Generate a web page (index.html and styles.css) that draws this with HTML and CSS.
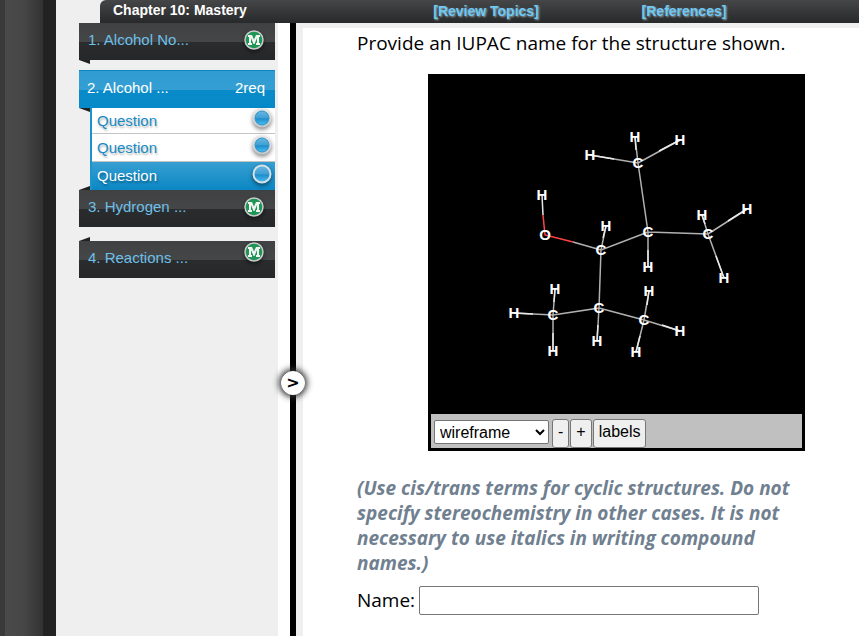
FILE: index.html
```html
<!DOCTYPE html>
<html lang="en">
<head>
    <meta charset="UTF-8">
    <meta name="viewport" content="width=device-width, initial-scale=1.0">
    <title>Chapter 10: Mastery</title>
    <link rel="stylesheet" href="styles.css">
</head>
<body>
    <svg class="defs" aria-hidden="true">
        <defs>
            <linearGradient id="ball" x1="0" y1="0" x2="0" y2="1">
                <stop offset="0" stop-color="#6ab8e2"/>
                <stop offset="0.5" stop-color="#3f9fd4"/>
                <stop offset="0.55" stop-color="#1e8ccc"/>
                <stop offset="1" stop-color="#4cc0f0"/>
            </linearGradient>
            <linearGradient id="ring" x1="0" y1="0" x2="0" y2="1">
                <stop offset="0" stop-color="#e8e8e8"/>
                <stop offset="1" stop-color="#c4c8ca"/>
            </linearGradient>
            <symbol id="mastered" viewBox="0 0 20 20">
                <circle cx="10" cy="10" r="9" fill="#1f9656" stroke="#c9cccb" stroke-width="1.500"/>
                <path d="M4 5h4l2 4.500L12 5h4v2h-1v6h1v2h-4v-2h1V8l-2.500 6h-1L7 8v5h1v2H4v-2h1V7H4z" fill="#f2f3f2"/>
            </symbol>
            <symbol id="question" viewBox="0 0 20 20">
                <circle cx="10" cy="10" r="9.500" fill="url(#ring)"/>
                <circle cx="10" cy="10" r="7" fill="url(#ball)" stroke="#2b93cc"/>
            </symbol>
            <symbol id="current" viewBox="0 0 20 20">
                <circle cx="10" cy="10" r="8.500" fill="url(#ball)" stroke="#d5e2e9" stroke-width="2"/>
            </symbol>
        </defs>
    </svg>

    <div class="rail"></div>
    <div class="page">
        <header class="topbar">
            <h1>Chapter 10: Mastery</h1>
            <a href="#">[Review Topics]</a>
            <a href="#">[References]</a>
        </header>
        <div class="columns">
            <nav class="sidebar">
                <a class="topic fold-below" href="#">
                    <span>1. Alcohol No...</span>
                    <svg class="icon"><use href="#mastered"/></svg>
                </a>
                <a class="topic active" href="#">
                    <span>2. Alcohol ...</span>
                    <span>2req</span>
                </a>
                <div class="questions">
                    <a class="question" href="#">Question <svg class="icon"><use href="#question"/></svg></a>
                    <a class="question" href="#">Question <svg class="icon"><use href="#question"/></svg></a>
                    <a class="question current" href="#">Question <svg class="icon"><use href="#current"/></svg></a>
                </div>
                <a class="topic fold-above" href="#">
                    <span>3. Hydrogen ...</span>
                    <svg class="icon"><use href="#mastered"/></svg>
                </a>
                <a class="topic fold-above last" href="#">
                    <span>4. Reactions ...</span>
                    <svg class="icon"><use href="#mastered"/></svg>
                </a>
            </nav>
            <div class="divider">
                <button class="toggle" type="button" aria-label="Toggle sidebar">&gt;</button>
            </div>
            <main class="content">
                <p class="prompt">Provide an IUPAC name for the structure shown.</p>
                <div class="viewer">
                    <svg class="molecule" viewBox="0 0 371 337">
                        <g class="bonds">
                            <path d="M207 86L217 155L277 157M217 155L170 173L168 231L122 238M168 231L213 243"/>
                            <path d="M207 86L204 60M207 86L249 63M207 86L159 78M217 155V190M277 157L271 138M277 157L316 132M277 157L293 201M170 173L175 149M168 231L166 264M122 238L124 212M122 238L83 236M122 238V274M213 243L218 214M213 243L249 254M213 243L205 275M170 173L142 165"/>
                        </g>
                        <path class="bonds-h" d="M205 73L204 60M228 74L249 63M183 82L159 78M217 173V190M274 147L271 138M297 144L316 132M285 179L293 201M172 161L175 149M167 248L166 264M123 225L124 212M102 237L83 236M122 256V274M216 228L218 214M231 248L249 254M209 259L205 275M112 138L111 118"/>
                        <path class="bonds-o" d="M112 138L114 158L142 165"/>
                        <g class="atoms">
                            <text x="207" y="91">C</text>
                            <text x="204" y="65">H</text>
                            <text x="249" y="68">H</text>
                            <text x="159" y="83">H</text>
                            <text x="217" y="160">C</text>
                            <text x="217" y="195">H</text>
                            <text x="277" y="162">C</text>
                            <text x="271" y="143">H</text>
                            <text x="316" y="137">H</text>
                            <text x="293" y="206">H</text>
                            <text x="170" y="178">C</text>
                            <text x="175" y="154">H</text>
                            <text x="114" y="163">O</text>
                            <text x="111" y="123">H</text>
                            <text x="168" y="236">C</text>
                            <text x="166" y="269">H</text>
                            <text x="122" y="243">C</text>
                            <text x="124" y="217">H</text>
                            <text x="83" y="241">H</text>
                            <text x="122" y="279">H</text>
                            <text x="213" y="248">C</text>
                            <text x="218" y="219">H</text>
                            <text x="249" y="259">H</text>
                            <text x="205" y="280">H</text>
                        </g>
                    </svg>
                    <div class="toolbar">
                        <select aria-label="Display style">
                            <option>wireframe</option>
                        </select>
                        <button type="button">-</button>
                        <button type="button">+</button>
                        <button type="button">labels</button>
                    </div>
                </div>
                <p class="hint">(Use cis/trans terms for cyclic structures. Do not specify stereochemistry in other cases. It is not necessary to use italics in writing compound names.)</p>
                <div class="answer">
                    <label for="name">Name:</label>
                    <input type="text" id="name">
                </div>
            </main>
        </div>
    </div>
</body>
</html>
```

FILE: styles.css
```css
* {
    box-sizing: border-box;
}
body {
    display: flex;
    min-height: 100vh;
    margin: 0;
    background-color: #efefef;
    font-family: "Liberation Sans", Arial, sans-serif;
}
a {
    text-decoration: none;
}
.defs {
    position: absolute;
    width: 0;
    height: 0;
}

/* left edge */
.rail {
    flex: none;
    width: 56px;
    border-left: 5px solid #3a3a3a;
    border-right: 13px solid #222;
    background: linear-gradient(to right, #4a4a4a, #464646 50%, #323232);
}
.page {
    display: flex;
    flex-direction: column;
    flex: 1;
    min-width: 0;
}

/* top bar */
.topbar {
    display: grid;
    grid-template-columns: 274px 198px 198px;
    align-items: center;
    height: 23px;
    margin-left: 44px;
    padding: 0 0 2px 13px;
    border-top-left-radius: 6px;
    background: linear-gradient(#454648, #28292b);
    font-size: 14px;
    font-weight: bold;
    line-height: 20px;
}
.topbar h1 {
    margin: 0 0 2px;
    font-size: 14px;
    color: #fff;
}
.topbar a {
    text-align: center;
    color: #6dc9f5;
    text-shadow: 1px 1px 2px #9aa;
}
.columns {
    display: flex;
    flex: 1;
}

/* sidebar */
.sidebar {
    flex: none;
    width: 222px;
    padding: 0 3px 0 23px;
    font-size: 15px;
}
.topic {
    position: relative;
    display: flex;
    align-items: center;
    justify-content: space-between;
    height: 37px;
    padding: 0 11px 4px 9px;
    background: linear-gradient(#404142, #454647 50%, #2b2c2e 51%, #262729);
    color: #6dc0ea;
}
.topic.active {
    height: 38px;
    margin-top: 10px;
    padding: 0 10px 4px 8px;
    border-top: 1px solid #0a85c0;
    background: linear-gradient(#2f9bd0, #359fd4 50%, #0a8bc9 51%, #0589c8);
    color: #fff;
}
.topic.last {
    margin-top: 14px;
}
.topic.last .icon {
    align-self: flex-start;
    margin-top: 1px;
}
.fold-below::after,
.active::after,
.fold-above::before {
    content: "";
    position: absolute;
    left: 0;
    width: 11px;
    height: 4px;
    background-color: #222;
}
.fold-below::after,
.active::after {
    top: 100%;
    clip-path: polygon(0 0, 100% 0, 100% 100%);
}
.fold-above::before {
    bottom: 100%;
    clip-path: polygon(0 100%, 100% 0, 100% 100%);
}
.icon {
    width: 20px;
    height: 20px;
    filter: drop-shadow(0 2px 2px rgba(0, 0, 0, 0.5));
}
.questions {
    margin-left: 11px;
    border-left: 2px solid #1a94cd;
    background-color: #fff;
}
.question {
    display: flex;
    align-items: center;
    justify-content: space-between;
    height: 28px;
    padding: 0 3px 1px 5px;
    border-bottom: 1px solid #c4c4c4;
    color: #168bc4;
    text-shadow: 1px 2px 2px #bbb;
}
.questions .question:first-child {
    height: 26px;
}
.question.current {
    border-bottom: 0;
    background: linear-gradient(#379fd2, #0b87c4);
    color: #fff;
    text-shadow: 1px 2px 2px #06638f;
}
.question .icon {
    flex: none;
    margin-bottom: 4px;
}

/* splitter */
.divider {
    position: relative;
    flex: none;
    width: 18px;
    border-left: 12px solid #fff;
    background-color: #000;
}
.toggle {
    position: absolute;
    top: 348px;
    left: -9px;
    width: 24px;
    height: 24px;
    padding: 0;
    border: 1px solid #fff;
    border-radius: 50%;
    background-color: #fff;
    box-shadow: 0 0 6px 2px #333;
    font-family: "DejaVu Sans", sans-serif;
    font-size: 16px;
    font-weight: bold;
    line-height: 20px;
    color: #000;
}

/* question */
.content {
    flex: 1;
    min-width: 0;
    padding: 3px 50px 16px 54px;
    border-top: 5px solid #efefef;
    border-left: 7px solid #efefef;
    background-color: #fff;
    font-family: "Open Sans", sans-serif;
    font-size: 19px;
    line-height: 25px;
    color: #000;
}
.content p {
    margin: 0;
}
.viewer {
    max-width: 377px;
    margin: 18px 0 25px 71px;
    padding: 3px;
    background-color: #000;
}
.molecule {
    display: block;
    width: 100%;
}
.bonds,
.bonds-h,
.bonds-o {
    fill: none;
    stroke: #b0b0b0;
    stroke-width: 1.5;
}
.bonds-h {
    stroke: #e8e8e8;
}
.bonds-o {
    stroke: #f44;
}
.atoms {
    font-family: "Liberation Sans", Arial, sans-serif;
    font-size: 15px;
    font-weight: bold;
    text-anchor: middle;
    fill: #fff;
}
.toolbar {
    display: flex;
    align-items: flex-end;
    gap: 1px;
    height: 34px;
    padding-left: 3px;
    background-color: #c0c0c0;
}
.toolbar select,
.toolbar button {
    border: 1px solid #767676;
    border-radius: 3px;
    font-family: "Liberation Sans", Arial, sans-serif;
    font-size: 16px;
    color: #000;
}
.toolbar select {
    width: 115px;
    height: 24px;
    margin: 0 2px 4px 0;
    padding-left: 1px;
    border-radius: 2px;
    background-color: #fff;
}
.toolbar button {
    height: 29px;
    padding: 0 5px 3px;
    background-color: #efefef;
}
.hint {
    font-weight: bold;
    font-style: italic;
    color: #708090;
}
.answer {
    display: flex;
    align-items: center;
    gap: 4px;
    margin-top: 10px;
}
.answer input {
    width: 340px;
    height: 29px;
    border: 1px solid #767676;
    border-radius: 2px;
    font-size: 16px;
}
```
